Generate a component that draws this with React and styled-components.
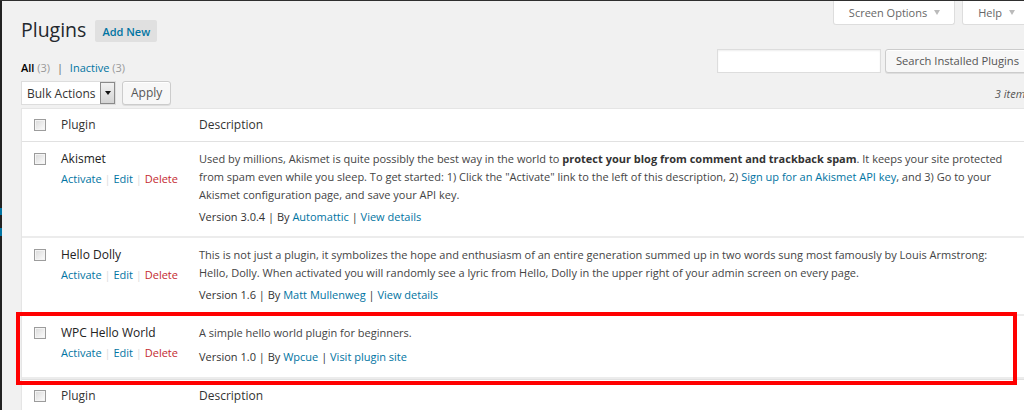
import React from 'react';
import styled, { createGlobalStyle } from 'styled-components';

const GlobalStyle = createGlobalStyle`
  html, body { margin: 0; padding: 0; background: #f1f1f1; overflow: hidden; }
  body { font-family: "Open Sans", "Liberation Sans", sans-serif; color: #444; font-size: 11px; }
  #root { width: 1050px; }
  a { text-decoration: none; }
`;

const Page = styled.div`
  display: flex;
  flex-direction: column;
  width: 1050px;
  min-height: 410px;
`;

const AdminBar = styled.div`
  height: 1px;
  background: #2f2f2f;
`;

const Body = styled.div`
  display: flex;
  flex: 1;
`;

const MenuEdge = styled.div`
  width: 2px;
  flex: none;
  background: #222;
  display: flex;
  flex-direction: column;
  padding-top: 207px;
  gap: 13px;
`;

const MenuMark = styled.span`
  display: block;
  height: ${p => p.$h}px;
  background: #0074a2;
`;

const Main = styled.main`
  flex: 1;
  padding: 0 20px 0 19px;
  display: flex;
  flex-direction: column;
`;

const Header = styled.header`
  display: flex;
  justify-content: space-between;
  align-items: flex-start;
`;

const HeaderLeft = styled.div`
  display: flex;
  flex-direction: column;
`;

const TitleRow = styled.div`
  margin-top: 17px;
  height: 26px;
  display: flex;
  align-items: center;
  gap: 9px;
`;

const Title = styled.h2`
  margin: 0;
  padding-bottom: 3px;
  font-size: 19.5px;
  font-weight: 400;
  line-height: 26px;
  color: #23282d;
`;

const AddNew = styled.a`
  display: flex;
  align-items: center;
  height: 22px;
  padding: 0 7px;
  border-radius: 2px;
  background: #e0e0e0;
  color: #0074a2;
  font-weight: 600;
  font-size: 11px;
`;

const SubNav = styled.div`
  margin-top: 15px;
  line-height: 18px;
  font-size: 11px;
  color: #666;
`;

const Current = styled.span`
  color: #000;
  font-weight: 600;
`;

const Count = styled.span`
  color: #999;
`;

const Divider = styled.span`
  margin: 0 4px;
`;

const Link = styled.a`
  color: ${p => (p.$danger ? '#c42a30' : '#0074a2')};
`;

const HeaderRight = styled.div`
  display: flex;
  flex-direction: column;
  align-items: flex-end;
`;

const Tabs = styled.div`
  display: flex;
  gap: 7px;
`;

const Tab = styled.div`
  height: 24px;
  box-sizing: border-box;
  padding: 0 14px 0 15px;
  display: flex;
  align-items: center;
  gap: 7px;
  background: #fff;
  border: 1px solid #ddd;
  border-top: 0;
  border-radius: 0 0 3px 3px;
  color: #666;
  font-size: 11px;
`;

const Caret = styled.span`
  width: 0;
  height: 0;
  border-left: 3.5px solid transparent;
  border-right: 3.5px solid transparent;
  border-top: 5px solid #bbb;
`;

const SearchRow = styled.div`
  margin-top: 24px;
  display: flex;
  gap: 4px;
`;

const SearchInput = styled.div`
  width: 164px;
  height: 24px;
  box-sizing: border-box;
  background: #fff;
  border: 1px solid #ddd;
  box-shadow: inset 0 1px 2px rgba(0, 0, 0, 0.07);
`;

const Button = styled.button`
  height: 24px;
  box-sizing: border-box;
  padding: 0 ${p => p.$pad || 10}px;
  background: #f7f7f7;
  border: 1px solid #ccc;
  border-radius: 3px;
  box-shadow: inset 0 1px 0 #fff, 0 1px 0 rgba(0, 0, 0, 0.08);
  color: #555;
  font-family: inherit;
  font-size: ${p => p.$size || 12}px;
  line-height: 22px;
  cursor: pointer;
`;

const TableNav = styled.div`
  margin-top: 4px;
  height: 24px;
  display: flex;
  align-items: center;
  gap: 6px;
`;

const Select = styled.div`
  width: 95px;
  height: 24px;
  box-sizing: border-box;
  background: #fff;
  border: 1px solid #ddd;
  display: flex;
  align-items: center;
  justify-content: space-between;
  padding-left: 5px;
  color: #333;
  font-size: 12px;
`;

const SelectArrow = styled.span`
  width: 15px;
  height: 22px;
  box-sizing: border-box;
  border: 1px solid #8a8a8a;
  background: linear-gradient(#f2f2f2, #d4d4d4);
  display: flex;
  align-items: center;
  justify-content: center;
  &::after {
    content: '';
    border-left: 3px solid transparent;
    border-right: 3px solid transparent;
    border-top: 4px solid #111;
  }
`;

const ItemCount = styled.span`
  margin-left: auto;
  font-style: italic;
  color: #555;
  font-size: 11px;
`;

const Table = styled.div`
  margin-top: 3px;
  background: #fff;
  border: 1px solid #e5e5e5;
  border-bottom: 0;
  box-shadow: 0 1px 1px rgba(0, 0, 0, 0.04);
`;

const Row = styled.div`
  display: grid;
  grid-template-columns: 39px 138px 1fr;
`;

const HeadRow = styled(Row)`
  padding: 7px 0;
  line-height: 18px;
  font-size: 12px;
  color: #333;
  align-items: center;
  border-${p => (p.$foot ? 'top' : 'bottom')}: 1px solid #e1e1e1;
`;

const PluginRow = styled(Row)`
  position: relative;
  padding: 8px 0 ${p => (p.$tall ? 11 : 10)}px;
  border-bottom: 2px solid #ececec;
  line-height: 18px;
`;

const Highlight = styled.div`
  position: absolute;
  left: -6px;
  right: 12px;
  top: -4px;
  bottom: -8px;
  border: 4px solid #f00;
  pointer-events: none;
`;

const CheckCell = styled.div`
  padding-left: 12px;
  padding-top: ${p => (p.$head ? 0 : 3)}px;
  display: flex;
  align-items: ${p => (p.$head ? 'center' : 'flex-start')};
`;

const Checkbox = styled.span`
  display: block;
  width: 12px;
  height: 12px;
  box-sizing: border-box;
  border: 1px solid #9c9c9c;
  background: linear-gradient(135deg, #d9d9d9, #fdfdfd);
  box-shadow: inset 0 0 0 1px #f4f4f4;
`;

const NameCell = styled.div`
  display: flex;
  flex-direction: column;
`;

const PluginName = styled.strong`
  font-weight: 400;
  font-size: 12px;
  color: #222;
`;

const Actions = styled.div`
  margin-top: 2px;
  font-size: 11px;
  color: #ddd;
`;

const DescCell = styled.div`
  padding-right: 10px;
  font-size: 11px;
  color: #444;
`;

const DescText = styled.p`
  margin: 0;
  b { font-weight: 700; color: #333; }
`;

const Version = styled.div`
  margin-top: ${p => (p.$tall ? 6 : 4)}px;
  color: #333;
`;

const ColLabel = styled.span``;

const plugins = [
  {
    name: 'Akismet',
    desc: (
      <>
        Used by millions, Akismet is quite possibly the best way in the world to{' '}
        <b>protect your blog from comment and trackback spam</b>. It keeps your site protected from spam even while
        you sleep. To get started: 1) Click the "Activate" link to the left of this description, 2){' '}
        <Link href="#">Sign up for an Akismet API key</Link>, and 3) Go to your Akismet configuration page, and save
        your API key.
      </>
    ),
    version: '3.0.4',
    author: 'Automattic',
    last: 'View details',
  },
  {
    name: 'Hello Dolly',
    desc: (
      <>
        This is not just a plugin, it symbolizes the hope and enthusiasm of an entire generation summed up in two
        words sung most famously by Louis Armstrong: Hello, Dolly. When activated you will randomly see a lyric from
        Hello, Dolly in the upper right of your admin screen on every page.
      </>
    ),
    version: '1.6',
    author: 'Matt Mullenweg',
    last: 'View details',
  },
  {
    name: 'WPC Hello World',
    desc: <>A simple hello world plugin for beginners.</>,
    version: '1.0',
    author: 'Wpcue',
    last: 'Visit plugin site',
    highlight: true,
  },
];

function Head({ foot }) {
  return (
    <HeadRow $foot={foot}>
      <CheckCell $head>
        <Checkbox />
      </CheckCell>
      <ColLabel>Plugin</ColLabel>
      <ColLabel>Description</ColLabel>
    </HeadRow>
  );
}

export default function App() {
  return (
    <Page>
      <GlobalStyle />
      <AdminBar />
      <Body>
        <MenuEdge>
          <MenuMark $h={7} />
          <MenuMark $h={8} />
        </MenuEdge>
        <Main>
          <Header>
            <HeaderLeft>
              <TitleRow>
                <Title>Plugins</Title>
                <AddNew href="#">Add New</AddNew>
              </TitleRow>
              <SubNav>
                <Current>All</Current> <Count>(3)</Count> <Divider>|</Divider> <Link href="#">Inactive</Link>{' '}
                <Count>(3)</Count>
              </SubNav>
            </HeaderLeft>
            <HeaderRight>
              <Tabs>
                <Tab>
                  Screen Options <Caret />
                </Tab>
                <Tab>
                  Help <Caret />
                </Tab>
              </Tabs>
              <SearchRow>
                <SearchInput />
                <Button $size={11.2}>Search Installed Plugins</Button>
              </SearchRow>
            </HeaderRight>
          </Header>
          <TableNav>
            <Select>
              Bulk Actions
              <SelectArrow />
            </Select>
            <Button $pad={8}>Apply</Button>
            <ItemCount>3 items</ItemCount>
          </TableNav>
          <Table>
            <Head />
            {plugins.map(p => (
              <PluginRow key={p.name} $tall={p.highlight}>
                {p.highlight && <Highlight />}
                <CheckCell>
                  <Checkbox />
                </CheckCell>
                <NameCell>
                  <PluginName>{p.name}</PluginName>
                  <Actions>
                    <Link href="#">Activate</Link> | <Link href="#">Edit</Link> |{' '}
                    <Link href="#" $danger>
                      Delete
                    </Link>
                  </Actions>
                </NameCell>
                <DescCell>
                  <DescText>{p.desc}</DescText>
                  <Version $tall={p.highlight}>
                    Version {p.version} | By <Link href="#">{p.author}</Link> | <Link href="#">{p.last}</Link>
                  </Version>
                </DescCell>
              </PluginRow>
            ))}
            <Head foot />
          </Table>
        </Main>
      </Body>
    </Page>
  );
}
